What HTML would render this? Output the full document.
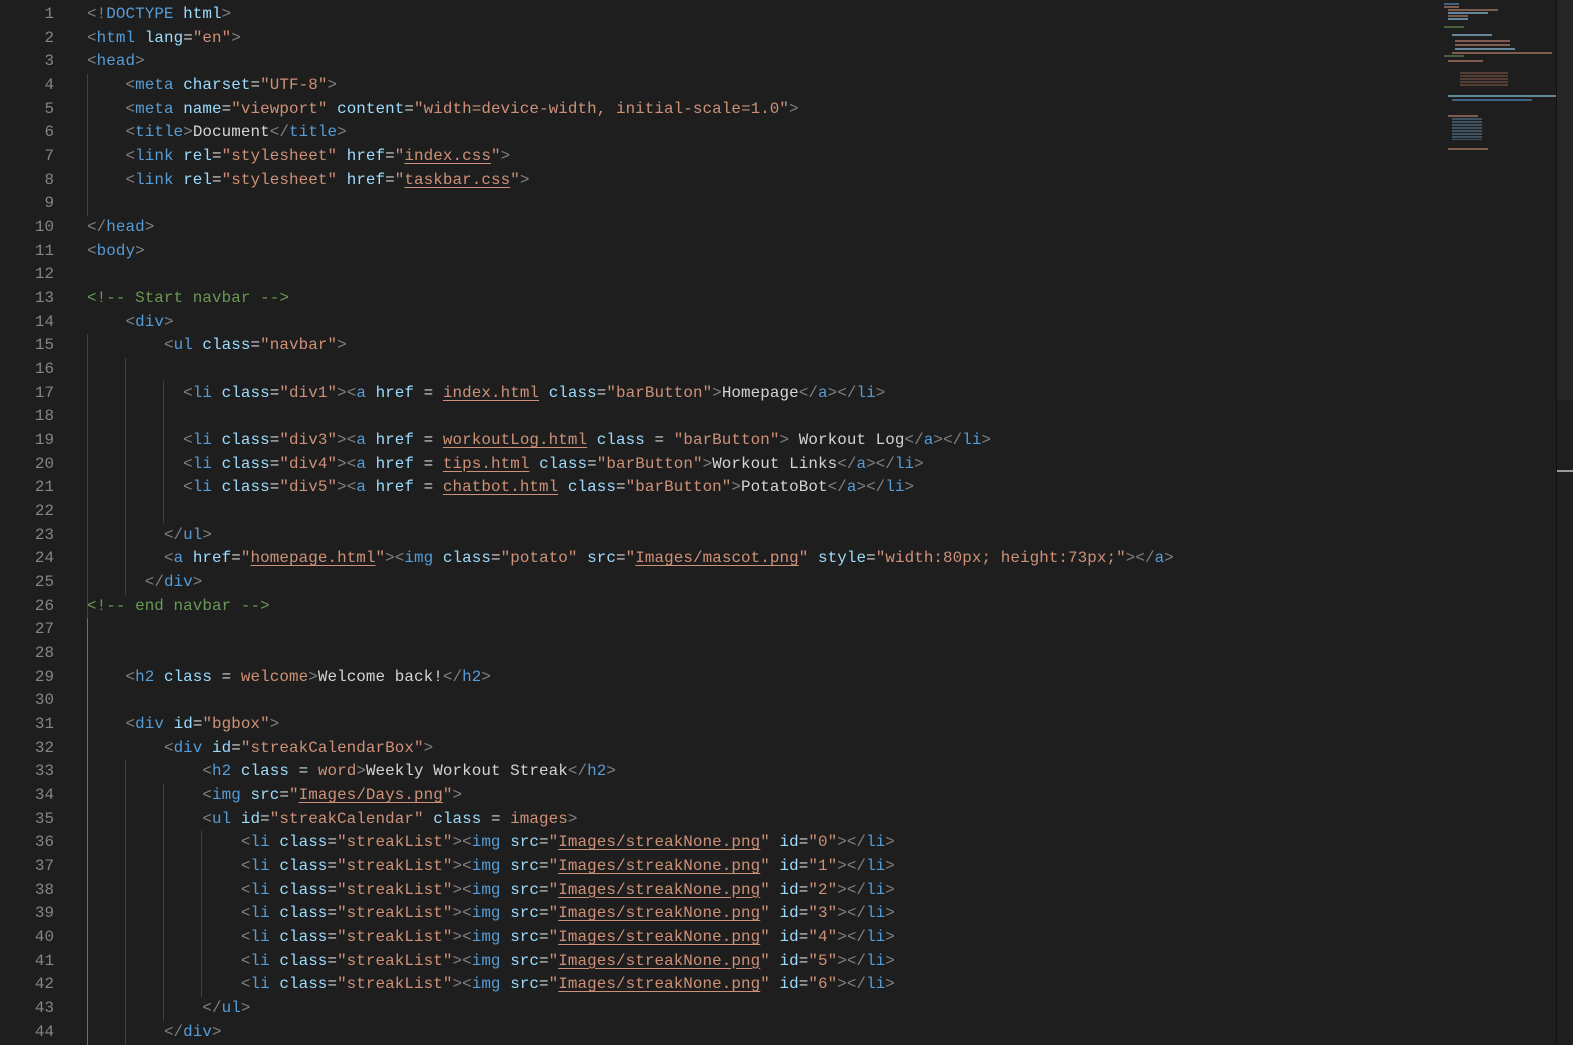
<!DOCTYPE html>
<html><head><meta charset="utf-8">
<style>
html,body{margin:0;padding:0;background:#1e1e1e;width:1573px;height:1045px;overflow:hidden;}
body{position:relative;font-family:"Liberation Mono",monospace;font-size:15.9px;}
.ln,.l,.g{transform:translateY(2px);}
.ln{position:absolute;left:0;width:54px;text-align:right;color:#858585;height:23.67px;line-height:23.67px;}
.l{position:absolute;left:87px;white-space:pre;color:#d4d4d4;height:23.67px;line-height:23.67px;letter-spacing:0.08px;}
.t{color:#569cd6}.p{color:#808080}.a{color:#9cdcfe}.s{color:#ce9178}.c{color:#6a9955}
.u{text-decoration:underline;text-underline-offset:3px;}
.g{position:absolute;width:1px;background:#404040;}
.mm{position:absolute;height:2px;opacity:.55}
</style></head><body>
<div class="g" style="left:87px;top:72px;height:142px"></div>
<div class="g" style="left:87px;top:332px;height:284px"></div>
<div class="g" style="left:87px;top:616px;height:429px;background:#707070"></div>
<div class="g" style="left:125px;top:356px;height:237px"></div>
<div class="g" style="left:163px;top:379px;height:142px"></div>
<div class="g" style="left:125px;top:758px;height:287px"></div>
<div class="g" style="left:163px;top:782px;height:237px"></div>
<div class="g" style="left:201px;top:829px;height:166px"></div>

<div class="ln" style="top:1px">1</div><div class="l" style="top:1px"><span class="p">&lt;!</span><span class="t">DOCTYPE</span> <span class="a">html</span><span class="p">&gt;</span></div>
<div class="ln" style="top:24.67px">2</div><div class="l" style="top:24.67px"><span class="p">&lt;</span><span class="t">html</span> <span class="a">lang</span>=<span class="s">"en"</span><span class="p">&gt;</span></div>
<div class="ln" style="top:48.34px">3</div><div class="l" style="top:48.34px"><span class="p">&lt;</span><span class="t">head</span><span class="p">&gt;</span></div>
<div class="ln" style="top:72px">4</div><div class="l" style="top:72px">    <span class="p">&lt;</span><span class="t">meta</span> <span class="a">charset</span>=<span class="s">"UTF-8"</span><span class="p">&gt;</span></div>
<div class="ln" style="top:95.7px">5</div><div class="l" style="top:95.7px">    <span class="p">&lt;</span><span class="t">meta</span> <span class="a">name</span>=<span class="s">"viewport"</span> <span class="a">content</span>=<span class="s">"width=device-width, initial-scale=1.0"</span><span class="p">&gt;</span></div>
<div class="ln" style="top:119.4px">6</div><div class="l" style="top:119.4px">    <span class="p">&lt;</span><span class="t">title</span><span class="p">&gt;</span>Document<span class="p">&lt;/</span><span class="t">title</span><span class="p">&gt;</span></div>
<div class="ln" style="top:143px">7</div><div class="l" style="top:143px">    <span class="p">&lt;</span><span class="t">link</span> <span class="a">rel</span>=<span class="s">"stylesheet"</span> <span class="a">href</span>=<span class="s">"<span class="u">index.css</span>"</span><span class="p">&gt;</span></div>
<div class="ln" style="top:166.7px">8</div><div class="l" style="top:166.7px">    <span class="p">&lt;</span><span class="t">link</span> <span class="a">rel</span>=<span class="s">"stylesheet"</span> <span class="a">href</span>=<span class="s">"<span class="u">taskbar.css</span>"</span><span class="p">&gt;</span></div>
<div class="ln" style="top:190.4px">9</div>
<div class="ln" style="top:214px">10</div><div class="l" style="top:214px"><span class="p">&lt;/</span><span class="t">head</span><span class="p">&gt;</span></div>
<div class="ln" style="top:237.7px">11</div><div class="l" style="top:237.7px"><span class="p">&lt;</span><span class="t">body</span><span class="p">&gt;</span></div>
<div class="ln" style="top:261.4px">12</div>
<div class="ln" style="top:285px">13</div><div class="l c" style="top:285px">&lt;!-- Start navbar --&gt;</div>
<div class="ln" style="top:308.7px">14</div><div class="l" style="top:308.7px">    <span class="p">&lt;</span><span class="t">div</span><span class="p">&gt;</span></div>
<div class="ln" style="top:332.4px">15</div><div class="l" style="top:332.4px">        <span class="p">&lt;</span><span class="t">ul</span> <span class="a">class</span>=<span class="s">"navbar"</span><span class="p">&gt;</span></div>
<div class="ln" style="top:356px">16</div>
<div class="ln" style="top:379.7px">17</div><div class="l" style="top:379.7px">          <span class="p">&lt;</span><span class="t">li</span> <span class="a">class</span>=<span class="s">"div1"</span><span class="p">&gt;&lt;</span><span class="t">a</span> <span class="a">href</span> = <span class="s u">index.html</span> <span class="a">class</span>=<span class="s">"barButton"</span><span class="p">&gt;</span>Homepage<span class="p">&lt;/</span><span class="t">a</span><span class="p">&gt;&lt;/</span><span class="t">li</span><span class="p">&gt;</span></div>
<div class="ln" style="top:403.4px">18</div>
<div class="ln" style="top:427px">19</div><div class="l" style="top:427px">          <span class="p">&lt;</span><span class="t">li</span> <span class="a">class</span>=<span class="s">"div3"</span><span class="p">&gt;&lt;</span><span class="t">a</span> <span class="a">href</span> = <span class="s u">workoutLog.html</span> <span class="a">class</span> = <span class="s">"barButton"</span><span class="p">&gt;</span> Workout Log<span class="p">&lt;/</span><span class="t">a</span><span class="p">&gt;&lt;/</span><span class="t">li</span><span class="p">&gt;</span></div>
<div class="ln" style="top:450.7px">20</div><div class="l" style="top:450.7px">          <span class="p">&lt;</span><span class="t">li</span> <span class="a">class</span>=<span class="s">"div4"</span><span class="p">&gt;&lt;</span><span class="t">a</span> <span class="a">href</span> = <span class="s u">tips.html</span> <span class="a">class</span>=<span class="s">"barButton"</span><span class="p">&gt;</span>Workout Links<span class="p">&lt;/</span><span class="t">a</span><span class="p">&gt;&lt;/</span><span class="t">li</span><span class="p">&gt;</span></div>
<div class="ln" style="top:474.4px">21</div><div class="l" style="top:474.4px">          <span class="p">&lt;</span><span class="t">li</span> <span class="a">class</span>=<span class="s">"div5"</span><span class="p">&gt;&lt;</span><span class="t">a</span> <span class="a">href</span> = <span class="s u">chatbot.html</span> <span class="a">class</span>=<span class="s">"barButton"</span><span class="p">&gt;</span>PotatoBot<span class="p">&lt;/</span><span class="t">a</span><span class="p">&gt;&lt;/</span><span class="t">li</span><span class="p">&gt;</span></div>
<div class="ln" style="top:498px">22</div>
<div class="ln" style="top:521.7px">23</div><div class="l" style="top:521.7px">        <span class="p">&lt;/</span><span class="t">ul</span><span class="p">&gt;</span></div>
<div class="ln" style="top:545.4px">24</div><div class="l" style="top:545.4px">        <span class="p">&lt;</span><span class="t">a</span> <span class="a">href</span>=<span class="s">"<span class="u">homepage.html</span>"</span><span class="p">&gt;&lt;</span><span class="t">img</span> <span class="a">class</span>=<span class="s">"potato"</span> <span class="a">src</span>=<span class="s">"<span class="u">Images/mascot.png</span>"</span> <span class="a">style</span>=<span class="s">"width:80px; height:73px;"</span><span class="p">&gt;&lt;/</span><span class="t">a</span><span class="p">&gt;</span></div>
<div class="ln" style="top:569px">25</div><div class="l" style="top:569px">      <span class="p">&lt;/</span><span class="t">div</span><span class="p">&gt;</span></div>
<div class="ln" style="top:592.7px">26</div><div class="l c" style="top:592.7px">&lt;!-- end navbar --&gt;</div>
<div class="ln" style="top:616.4px">27</div>
<div class="ln" style="top:640px">28</div>
<div class="ln" style="top:663.7px">29</div><div class="l" style="top:663.7px">    <span class="p">&lt;</span><span class="t">h2</span> <span class="a">class</span> = <span class="s">welcome</span><span class="p">&gt;</span>Welcome back!<span class="p">&lt;/</span><span class="t">h2</span><span class="p">&gt;</span></div>
<div class="ln" style="top:687.4px">30</div>
<div class="ln" style="top:711px">31</div><div class="l" style="top:711px">    <span class="p">&lt;</span><span class="t">div</span> <span class="a">id</span>=<span class="s">"bgbox"</span><span class="p">&gt;</span></div>
<div class="ln" style="top:734.7px">32</div><div class="l" style="top:734.7px">        <span class="p">&lt;</span><span class="t">div</span> <span class="a">id</span>=<span class="s">"streakCalendarBox"</span><span class="p">&gt;</span></div>
<div class="ln" style="top:758.4px">33</div><div class="l" style="top:758.4px">            <span class="p">&lt;</span><span class="t">h2</span> <span class="a">class</span> = <span class="s">word</span><span class="p">&gt;</span>Weekly Workout Streak<span class="p">&lt;/</span><span class="t">h2</span><span class="p">&gt;</span></div>
<div class="ln" style="top:782px">34</div><div class="l" style="top:782px">            <span class="p">&lt;</span><span class="t">img</span> <span class="a">src</span>=<span class="s">"<span class="u">Images/Days.png</span>"</span><span class="p">&gt;</span></div>
<div class="ln" style="top:805.7px">35</div><div class="l" style="top:805.7px">            <span class="p">&lt;</span><span class="t">ul</span> <span class="a">id</span>=<span class="s">"streakCalendar"</span> <span class="a">class</span> = <span class="s">images</span><span class="p">&gt;</span></div>
<div class="ln" style="top:829.4px">36</div><div class="l" style="top:829.4px">                <span class="p">&lt;</span><span class="t">li</span> <span class="a">class</span>=<span class="s">"streakList"</span><span class="p">&gt;&lt;</span><span class="t">img</span> <span class="a">src</span>=<span class="s">"<span class="u">Images/streakNone.png</span>"</span> <span class="a">id</span>=<span class="s">"0"</span><span class="p">&gt;&lt;/</span><span class="t">li</span><span class="p">&gt;</span></div>
<div class="ln" style="top:853px">37</div><div class="l" style="top:853px">                <span class="p">&lt;</span><span class="t">li</span> <span class="a">class</span>=<span class="s">"streakList"</span><span class="p">&gt;&lt;</span><span class="t">img</span> <span class="a">src</span>=<span class="s">"<span class="u">Images/streakNone.png</span>"</span> <span class="a">id</span>=<span class="s">"1"</span><span class="p">&gt;&lt;/</span><span class="t">li</span><span class="p">&gt;</span></div>
<div class="ln" style="top:876.7px">38</div><div class="l" style="top:876.7px">                <span class="p">&lt;</span><span class="t">li</span> <span class="a">class</span>=<span class="s">"streakList"</span><span class="p">&gt;&lt;</span><span class="t">img</span> <span class="a">src</span>=<span class="s">"<span class="u">Images/streakNone.png</span>"</span> <span class="a">id</span>=<span class="s">"2"</span><span class="p">&gt;&lt;/</span><span class="t">li</span><span class="p">&gt;</span></div>
<div class="ln" style="top:900.4px">39</div><div class="l" style="top:900.4px">                <span class="p">&lt;</span><span class="t">li</span> <span class="a">class</span>=<span class="s">"streakList"</span><span class="p">&gt;&lt;</span><span class="t">img</span> <span class="a">src</span>=<span class="s">"<span class="u">Images/streakNone.png</span>"</span> <span class="a">id</span>=<span class="s">"3"</span><span class="p">&gt;&lt;/</span><span class="t">li</span><span class="p">&gt;</span></div>
<div class="ln" style="top:924px">40</div><div class="l" style="top:924px">                <span class="p">&lt;</span><span class="t">li</span> <span class="a">class</span>=<span class="s">"streakList"</span><span class="p">&gt;&lt;</span><span class="t">img</span> <span class="a">src</span>=<span class="s">"<span class="u">Images/streakNone.png</span>"</span> <span class="a">id</span>=<span class="s">"4"</span><span class="p">&gt;&lt;/</span><span class="t">li</span><span class="p">&gt;</span></div>
<div class="ln" style="top:947.7px">41</div><div class="l" style="top:947.7px">                <span class="p">&lt;</span><span class="t">li</span> <span class="a">class</span>=<span class="s">"streakList"</span><span class="p">&gt;&lt;</span><span class="t">img</span> <span class="a">src</span>=<span class="s">"<span class="u">Images/streakNone.png</span>"</span> <span class="a">id</span>=<span class="s">"5"</span><span class="p">&gt;&lt;/</span><span class="t">li</span><span class="p">&gt;</span></div>
<div class="ln" style="top:971.4px">42</div><div class="l" style="top:971.4px">                <span class="p">&lt;</span><span class="t">li</span> <span class="a">class</span>=<span class="s">"streakList"</span><span class="p">&gt;&lt;</span><span class="t">img</span> <span class="a">src</span>=<span class="s">"<span class="u">Images/streakNone.png</span>"</span> <span class="a">id</span>=<span class="s">"6"</span><span class="p">&gt;&lt;/</span><span class="t">li</span><span class="p">&gt;</span></div>
<div class="ln" style="top:995px">43</div><div class="l" style="top:995px">            <span class="p">&lt;/</span><span class="t">ul</span><span class="p">&gt;</span></div>
<div class="ln" style="top:1018.7px">44</div><div class="l" style="top:1018.7px">        <span class="p">&lt;/</span><span class="t">div</span><span class="p">&gt;</span></div>

<div class="mm" style="left:1444px;top:3px;width:15px;background:#569cd6"></div>
<div class="mm" style="left:1444px;top:6px;width:15px;background:#ce9178"></div>
<div class="mm" style="left:1448px;top:9px;width:50px;background:#ce9178"></div>
<div class="mm" style="left:1448px;top:12px;width:40px;background:#9cdcfe"></div>
<div class="mm" style="left:1448px;top:15px;width:20px;background:#ce9178"></div>
<div class="mm" style="left:1448px;top:18px;width:20px;background:#9cdcfe"></div>
<div class="mm" style="left:1444px;top:26px;width:20px;background:#6a9955"></div>
<div class="mm" style="left:1452px;top:34px;width:40px;background:#9cdcfe"></div>
<div class="mm" style="left:1455px;top:40px;width:55px;background:#ce9178"></div>
<div class="mm" style="left:1455px;top:44px;width:55px;background:#ce9178"></div>
<div class="mm" style="left:1455px;top:48px;width:60px;background:#9cdcfe"></div>
<div class="mm" style="left:1452px;top:52px;width:100px;background:#ce9178"></div>
<div class="mm" style="left:1444px;top:55px;width:20px;background:#6a9955"></div>
<div class="mm" style="left:1448px;top:60px;width:35px;background:#ce9178"></div>
<div style="position:absolute;left:1460px;top:72px;width:48px;height:14px;background:repeating-linear-gradient(#6b4c40 0 2px,transparent 2px 3px);opacity:.7"></div>
<div class="mm" style="left:1448px;top:95px;width:110px;background:#9cdcfe"></div>
<div class="mm" style="left:1452px;top:99px;width:80px;background:#569cd6"></div>
<div class="mm" style="left:1448px;top:115px;width:30px;background:#ce9178"></div>
<div style="position:absolute;left:1452px;top:118px;width:30px;height:22px;background:repeating-linear-gradient(#4a6a80 0 2px,transparent 2px 3px);opacity:.7"></div>
<div class="mm" style="left:1448px;top:148px;width:40px;background:#ce9178"></div>

<div style="position:absolute;left:1556px;top:0;width:1px;height:1045px;background:#111"></div>
<div style="position:absolute;left:1557px;top:0;width:16px;height:400px;background:#262626"></div>
<div style="position:absolute;left:1557px;top:470px;width:16px;height:2px;background:#9a9a9a"></div>
</body></html>
